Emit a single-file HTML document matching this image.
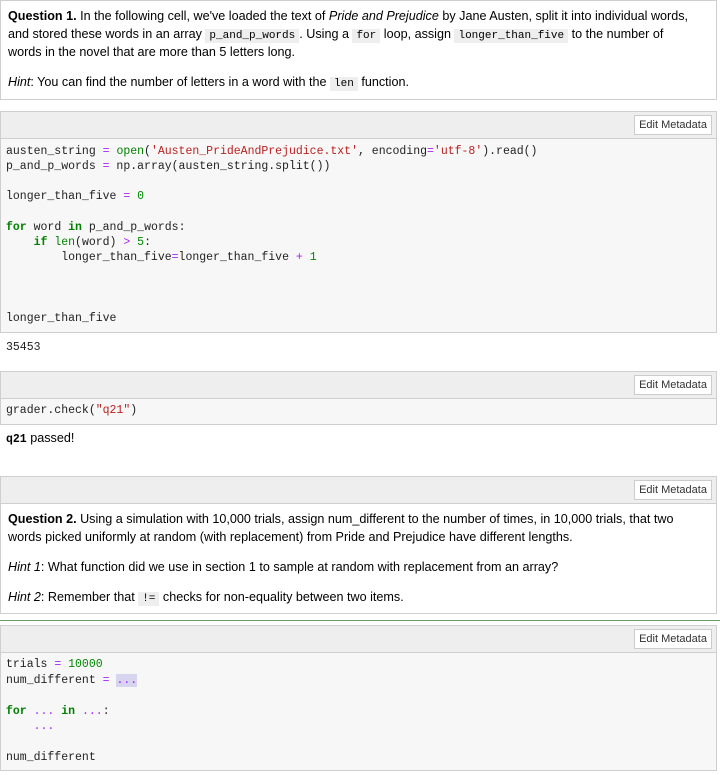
<!DOCTYPE html>
<html><head><meta charset="utf-8"><style>
body{margin:0;width:720px;height:775px;background:#fff;position:relative;overflow:hidden;font-family:"Liberation Sans",Arial,sans-serif;font-size:12.6px;color:#000}
.box{position:absolute;left:0;width:717px;border:1px solid #cfcfcf;box-sizing:border-box}
.hdr{position:absolute;left:0;right:0;top:0;height:26px;background:#eee;border-bottom:1px solid #cfcfcf}
.btn{position:absolute;right:4px;top:3px;width:78px;height:20px;background:#fff;border:1px solid #ccc;box-sizing:border-box;font-size:11px;line-height:18px;text-align:center;color:#333}
.code{background:#f7f7f7}
.l{position:absolute;white-space:pre;font-family:"Liberation Mono",monospace;font-size:11.5px;line-height:15px;left:6px;color:#222}
.t{position:absolute;left:8px;white-space:nowrap;line-height:18px}
code{font-family:"Liberation Mono",monospace;font-size:11px;background:#eee;padding:1px 4px}
.k{color:#008000;font-weight:bold}.o{color:#a2f}.s{color:#ba2121}.n{color:#080}.b{color:#008000}
</style></head><body>

<div class="box" style="top:0;height:100px"></div>
<div class="t" style="top:7px"><b>Question 1.</b> In the following cell, we've loaded the text of <i>Pride and Prejudice</i> by Jane Austen, split it into individual words,</div>
<div class="t" style="top:25px">and stored these words in an array <code>p_and_p_words</code>. Using a <code>for</code> loop, assign <code>longer_than_five</code> to the number of</div>
<div class="t" style="top:43px">words in the novel that are more than 5 letters long.</div>
<div class="t" style="top:73px"><i>Hint</i>: You can find the number of letters in a word with the <code>len</code> function.</div>

<div class="box code" style="top:111px;height:222px"><div class="hdr"><div class="btn">Edit Metadata</div></div></div>
<div class="l" style="top:144px">austen_string <span class="o">=</span> <span class="b">open</span>(<span class="s">'Austen_PrideAndPrejudice.txt'</span>, encoding<span class="o">=</span><span class="s">'utf-8'</span>).read()</div>
<div class="l" style="top:159px">p_and_p_words <span class="o">=</span> np.array(austen_string.split())</div>
<div class="l" style="top:189px">longer_than_five <span class="o">=</span> <span class="n">0</span></div>
<div class="l" style="top:220px"><span class="k">for</span> word <span class="k">in</span> p_and_p_words:</div>
<div class="l" style="top:235px">    <span class="k">if</span> <span class="b">len</span>(word) <span class="o">&gt;</span> <span class="n">5</span>:</div>
<div class="l" style="top:250px">        longer_than_five<span class="o">=</span>longer_than_five <span class="o">+</span> <span class="n">1</span></div>
<div class="l" style="top:311px">longer_than_five</div>
<div class="l" style="top:340px">35453</div>

<div class="box code" style="top:371px;height:54px"><div class="hdr"><div class="btn">Edit Metadata</div></div></div>
<div class="l" style="top:403px">grader.check(<span class="s">"q21"</span>)</div>
<div class="t" style="top:429px;left:6px"><span style="font-family:'Liberation Mono',monospace;font-size:11.5px;font-weight:bold">q21</span> passed!</div>

<div class="box" style="top:476px;height:138px"><div class="hdr"><div class="btn">Edit Metadata</div></div></div>
<div class="t" style="top:510px"><b>Question 2.</b> Using a simulation with 10,000 trials, assign num_different to the number of times, in 10,000 trials, that two</div>
<div class="t" style="top:528px">words picked uniformly at random (with replacement) from Pride and Prejudice have different lengths.</div>
<div class="t" style="top:558px"><i>Hint 1</i>: What function did we use in section 1 to sample at random with replacement from an array?</div>
<div class="t" style="top:588px"><i>Hint 2</i>: Remember that <code>!=</code> checks for non-equality between two items.</div>

<div style="position:absolute;left:0;top:620px;width:720px;height:1px;background:#6a9f6a"></div>

<div class="box code" style="top:625px;height:146px"><div class="hdr"><div class="btn">Edit Metadata</div></div></div>
<div class="l" style="top:657px">trials <span class="o">=</span> <span class="n">10000</span></div>
<div class="l" style="top:673px">num_different <span class="o">=</span> <span style="background:#d7d4f0" class="o">...</span></div>
<div class="l" style="top:704px"><span class="k">for</span> <span class="o">...</span> <span class="k">in</span> <span class="o">...</span>:</div>
<div class="l" style="top:719px">    <span class="o">...</span></div>
<div class="l" style="top:750px">num_different</div>
</body></html>
